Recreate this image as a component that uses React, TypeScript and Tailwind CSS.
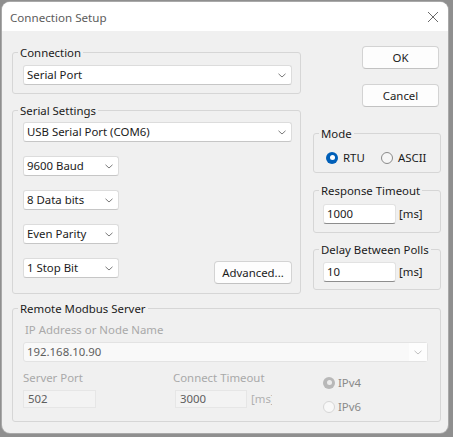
import React from 'react';

const font = { fontFamily: '"Noto Sans", "Segoe UI", "Liberation Sans", sans-serif' };

function Chevron({ color = '#7a7a7a' }: { color?: string }) {
    return (
        <svg width="8" height="5" viewBox="0 0 8 5" fill="none">
            <path d="M0.5 0.8 L4 4 L7.5 0.8" stroke={color} strokeWidth="1" />
        </svg>
    );
}

function Select({ value, className }: { value: string; className: string }) {
    return (
        <div className={`flex items-center justify-between h-[20px] bg-white border border-[#dcdcdc] border-b-[#c6c6c6] rounded-[3px] pl-[3px] pr-[5px] text-[#1b1b1b] ${className}`}>
            <span className="whitespace-nowrap leading-[18px]">{value}</span>
            <Chevron />
        </div>
    );
}

function TextBox({ value }: { value: string }) {
    return (
        <div className="w-[73px] h-[20px] bg-white border border-[#e2e2e2] border-b-[#8d8d8d] rounded-[3px] pl-[3px] leading-[18px] text-[#1b1b1b]">
            {value}
        </div>
    );
}

function GroupBox({ label, className, inner, children }: { label: string; className: string; inner: string; children: React.ReactNode }) {
    return (
        <fieldset className={`border border-[#d6d6d6] rounded-[3px] min-w-0 p-0 ${className}`}>
            <legend className="ml-[5px] px-[2px] leading-[15px] text-[#1b1b1b]">{label}</legend>
            <div className={inner}>{children}</div>
        </fieldset>
    );
}

function Radio({ label, checked }: { label: string; checked?: boolean }) {
    return (
        <div className="flex items-center gap-[5px] leading-[15px]">
            {checked ? (
                <span className="w-[12px] h-[12px] rounded-full bg-[#005fb8] flex items-center justify-center">
                    <span className="w-[5px] h-[5px] rounded-full bg-white" />
                </span>
            ) : (
                <span className="w-[12px] h-[12px] rounded-full border border-[#8a8a8a] bg-[#f6f6f6]" />
            )}
            <span className="text-[#1b1b1b]">{label}</span>
        </div>
    );
}

function WinButton({ label, className }: { label: string; className: string }) {
    return (
        <button className={`h-[23px] bg-[#fdfdfd] border border-[#d3d3d3] border-b-[#c2c2c2] rounded-[4px] text-[#1b1b1b] leading-[20px] ${className}`}>
            {label}
        </button>
    );
}

export default function App() {
    return (
        <div className="w-[453px] h-[437px] bg-[#8f8f8f] pl-[2px] pt-[2px] overflow-hidden text-[11.4px]" style={font}>
            <div className="w-[446px] h-[431px] rounded-[8px] bg-[#f0f0f0] overflow-hidden shadow-[0_0_0_1px_#a9a9a9]">
                {/* title bar */}
                <div className="h-[29px] bg-white flex items-center justify-between pl-[8px] pr-[8px]">
                    <span className="text-[#5c5c5c] leading-[15px] pt-[1px] text-[11.6px]">Connection Setup</span>
                    <svg width="12" height="12" viewBox="0 0 12 12" className="mr-[1px]">
                        <path d="M1 1 L11 11 M11 1 L1 11" stroke="#6a6a6a" strokeWidth="1" />
                    </svg>
                </div>

                <div className="pl-[10px]">
                    <div className="flex">
                        {/* left column */}
                        <div className="w-[289px] flex flex-col">
                            <GroupBox label="Connection" className="mt-[14px]" inner="pl-[10px] pt-[5px] pb-[8px]">
                                <Select value="Serial Port" className="w-[269px]" />
                            </GroupBox>

                            <GroupBox label="Serial Settings" className="mt-[9px]" inner="pl-[10px] pr-[8px] pt-[4px] pb-[9px] flex flex-col gap-[14px]">
                                <Select value="USB Serial Port (COM6)" className="w-[269px]" />
                                <Select value="9600 Baud" className="w-[96px]" />
                                <Select value="8 Data bits" className="w-[96px]" />
                                <Select value="Even Parity" className="w-[96px]" />
                                <div className="flex justify-between items-start">
                                    <Select value="1 Stop Bit" className="w-[96px]" />
                                    <WinButton label="Advanced..." className="w-[78px] h-[22px] mt-[3px]" />
                                </div>
                            </GroupBox>
                        </div>

                        {/* right column */}
                        <div className="w-[128px] ml-[12px] flex flex-col">
                            <WinButton label="OK" className="w-[77px] self-end mr-[2px] mt-[15px]" />
                            <WinButton label="Cancel" className="w-[77px] self-end mr-[2px] mt-[15px]" />

                            <GroupBox label="Mode" className="mt-[19px]" inner="pl-[12px] pt-[9px] pb-[7px] flex">
                                <div className="w-[55px]">
                                    <Radio label="RTU" checked />
                                </div>
                                <Radio label="ASCII" />
                            </GroupBox>

                            <GroupBox label="Response Timeout" className="mt-[10px]" inner="pl-[9px] pt-[6px] pb-[8px] flex items-center gap-[3px]">
                                <TextBox value="1000" />
                                <span className="text-[#1b1b1b]">[ms]</span>
                            </GroupBox>

                            <GroupBox label="Delay Between Polls" className="mt-[9px]" inner="pl-[9px] pt-[5px] pb-[7px] flex items-center gap-[3px]">
                                <TextBox value="10" />
                                <span className="text-[#1b1b1b]">[ms]</span>
                            </GroupBox>
                        </div>
                    </div>

                    {/* remote server, disabled */}
                    <GroupBox label="Remote Modbus Server" className="mt-[7px] w-[429px]" inner="pl-[10px] pr-[11px] pt-[6px] pb-[7px]">
                        <div className="ml-[2px] leading-[15px] text-[#a9a9a9]">IP Address or Node Name</div>
                        <div className="mt-[5px] w-[405px] h-[20px] flex items-center bg-[#f9f9f9] border border-[#e3e3e3] rounded-[3px]">
                            <span className="flex-1 pl-[3px] text-[#5e5e5e] leading-[18px]">192.168.10.90</span>
                            <span className="w-[18px] h-full flex items-center justify-center bg-[#fdfdfd]">
                                <Chevron color="#c0c0c0" />
                            </span>
                        </div>
                        <div className="mt-[8px] flex">
                            <div className="w-[150px]">
                                <div className="leading-[15px] text-[#a9a9a9]">Server Port</div>
                                <div className="mt-[5px] w-[73px] h-[18px] bg-[#f3f3f3] border border-[#e6e6e6] pl-[4px] leading-[16px] text-[#5e5e5e]">502</div>
                            </div>
                            <div className="w-[150px]">
                                <div className="leading-[15px] text-[#a9a9a9]">Connect Timeout</div>
                                <div className="mt-[5px] flex items-center">
                                    <div className="ml-[2px] w-[72px] h-[18px] bg-[#f3f3f3] border border-[#e6e6e6] pl-[4px] leading-[16px] text-[#5e5e5e]">3000</div>
                                    <span className="ml-[4px] w-[21px] overflow-hidden whitespace-nowrap text-[#b0b0b0] leading-[16px]">[ms]</span>
                                </div>
                            </div>
                            <div className="pt-[5px] flex flex-col gap-[9px]">
                                <div className="flex items-center gap-[3px] leading-[15px]">
                                    <span className="w-[12px] h-[12px] rounded-full bg-[#b8b8b8] flex items-center justify-center">
                                        <span className="w-[5px] h-[5px] rounded-full bg-[#ececec]" />
                                    </span>
                                    <span className="text-[#8a8a8a]">IPv4</span>
                                </div>
                                <div className="flex items-center gap-[3px] leading-[15px]">
                                    <span className="w-[12px] h-[12px] rounded-full border border-[#d6d6d6] bg-[#f8f8f8]" />
                                    <span className="text-[#8a8a8a]">IPv6</span>
                                </div>
                            </div>
                        </div>
                    </GroupBox>
                </div>
            </div>
        </div>
    );
}
